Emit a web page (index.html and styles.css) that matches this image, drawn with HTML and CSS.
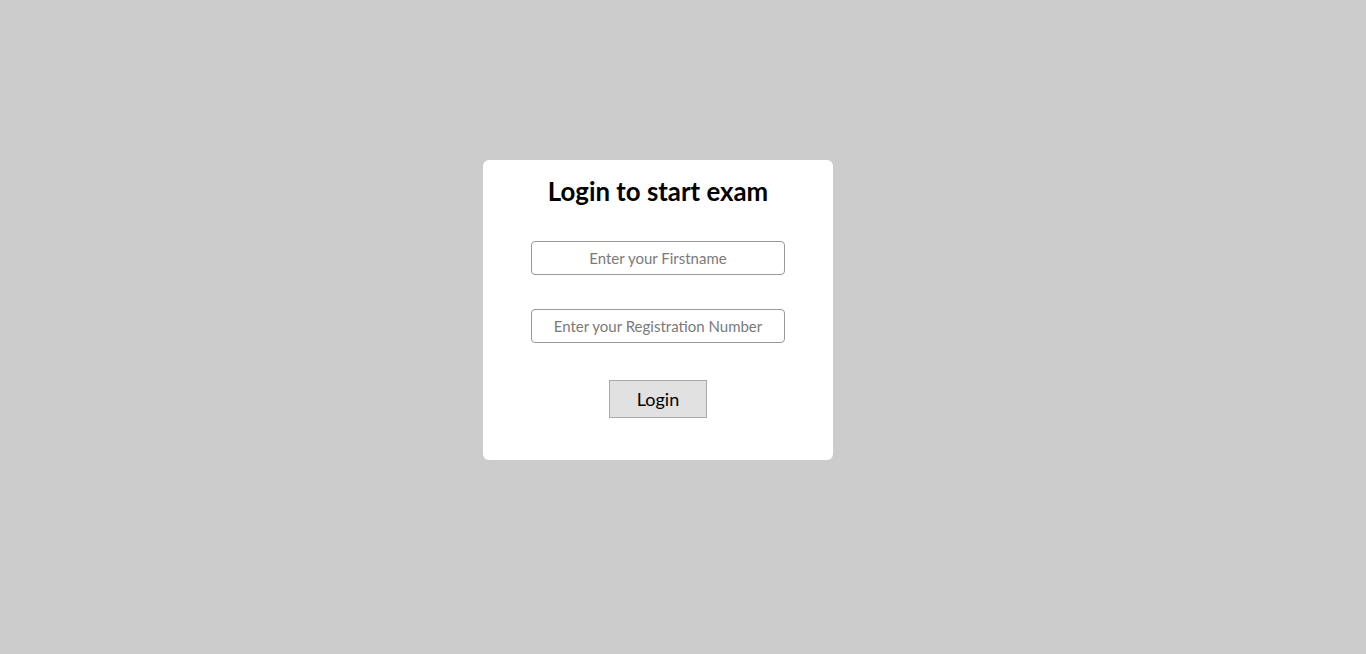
FILE: index.html
```html
<!DOCTYPE html>
<html>
<head>
<meta charset="utf-8">
<link rel="stylesheet" href="styles.css">
</head>
<body>
<div class="page">
  <form class="card">
    <h1 class="title">Login to start exam</h1>
    <input class="field" type="text" placeholder="Enter your Firstname">
    <input class="field field-second" type="text" placeholder="Enter your Registration Number">
    <button class="btn" type="button">Login</button>
  </form>
</div>
</body>
</html>
```
FILE: styles.css
```css
html, body {
  margin: 0;
  padding: 0;
  background: #cccccc;
  font-family: "Lato", "DejaVu Sans", sans-serif;
}
.page {
  height: 654px;
  display: flex;
  padding-top: 160px;
  padding-left: 483px;
  box-sizing: border-box;
}
.card {
  width: 350px;
  height: 300px;
  box-sizing: border-box;
  background: #ffffff;
  border-radius: 6px;
  display: flex;
  flex-direction: column;
  align-items: center;
  padding-top: 16px;
}
.title {
  margin: 0;
  font-size: 25.8px;
  line-height: 30px;
  font-weight: bold;
  color: #000;
}
.field {
  margin-top: 35px;
  width: 254px;
  height: 34px;
  box-sizing: border-box;
  border: 1px solid #999999;
  border-radius: 4px;
  text-align: center;
  font-family: inherit;
  font-size: 15px;
  color: #333;
  padding: 0 6px;
  outline: none;
}
.field::placeholder {
  color: #7a7a7a;
}
.field-second {
  margin-top: 34px;
}
.btn {
  margin-top: 37px;
  width: 98px;
  height: 38px;
  box-sizing: border-box;
  border: 1px solid #aaaaaa;
  background: #e1e1e1;
  font-family: inherit;
  font-size: 18px;
  color: #000;
  border-radius: 0;
  padding: 0;
}
```
